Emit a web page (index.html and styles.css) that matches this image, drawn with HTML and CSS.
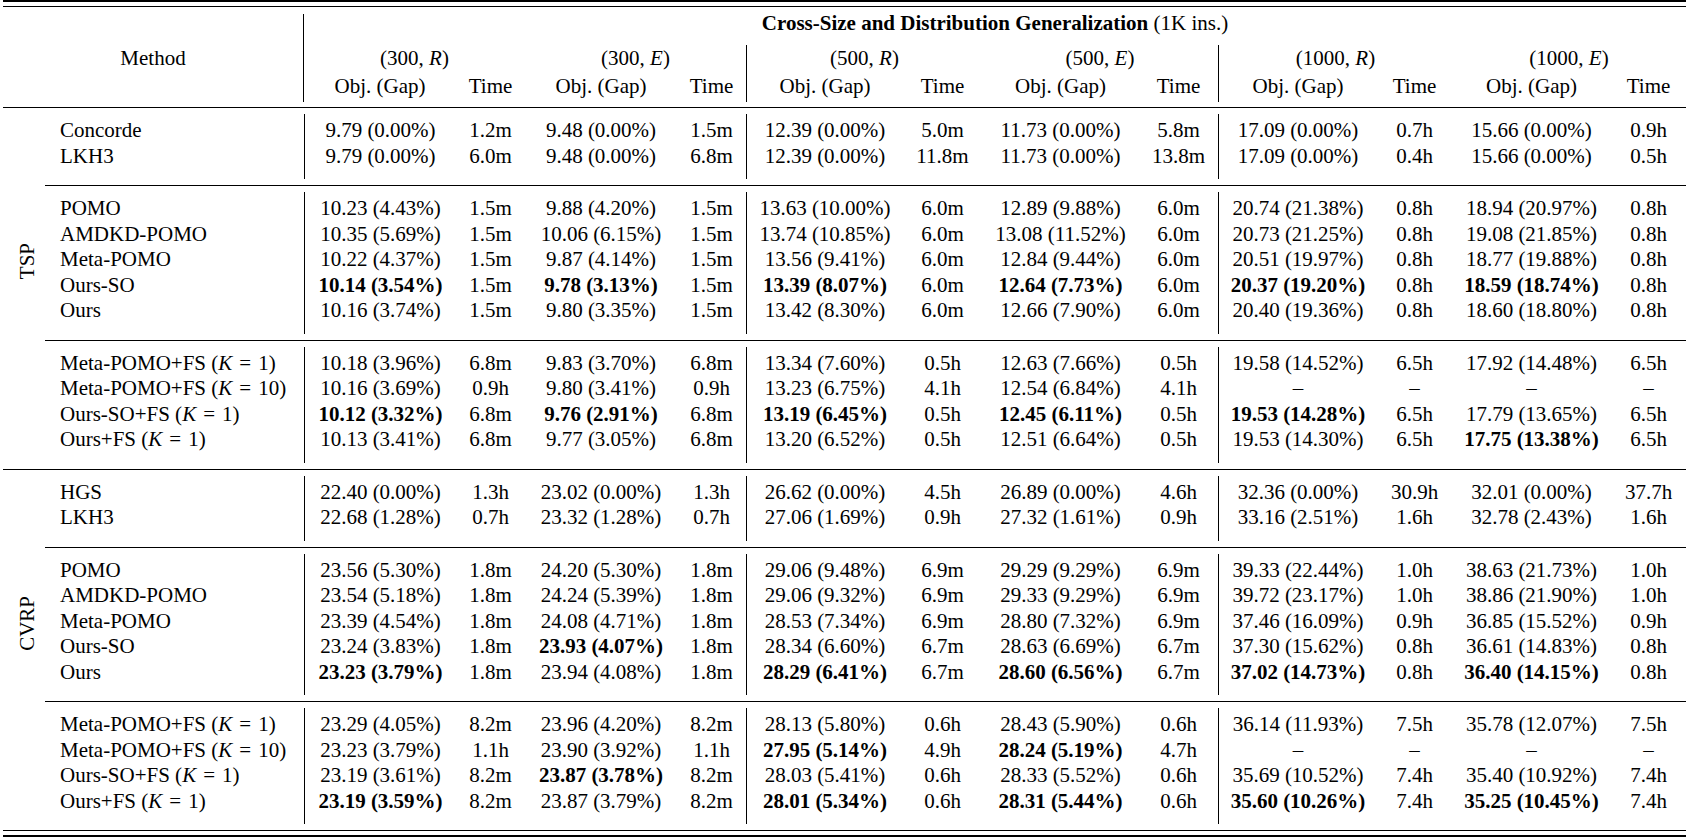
FILE: index.html
```html
<!DOCTYPE html>
<html>
<head>
<meta charset="utf-8">
<link rel="stylesheet" href="styles.css">
</head>
<body>
<table class="tbl">
<colgroup>
<col class="c-lab"><col class="c-meth">
<col class="c-o1"><col class="c-t1"><col class="c-o1"><col class="c-t1">
<col class="c-o2"><col class="c-t2"><col class="c-o2"><col class="c-t2">
<col class="c-o3"><col class="c-t3"><col class="c-o3"><col class="c-t3">
</colgroup>
<tbody>
<tr class="toprule"><td colspan="14"><div class="thick"></div><div class="thin"></div></td></tr>
<tr class="h1"><td colspan="2" class="vr"></td><td colspan="12"><b>Cross-Size and Distribution Generalization</b> (1K ins.)</td></tr>
<tr class="h2"><td colspan="2" class="vr">Method</td><td colspan="2">(300, <i>R</i>)</td><td colspan="2">(300, <i>E</i>)</td><td colspan="2" class="v">(500, <i>R</i>)</td><td colspan="2">(500, <i>E</i>)</td><td colspan="2" class="v">(1000, <i>R</i>)</td><td colspan="2">(1000, <i>E</i>)</td></tr>
<tr class="h3"><td colspan="2" class="vr"></td><td>Obj. (Gap)</td><td>Time</td><td>Obj. (Gap)</td><td>Time</td><td class="v">Obj. (Gap)</td><td>Time</td><td>Obj. (Gap)</td><td>Time</td><td class="v">Obj. (Gap)</td><td>Time</td><td>Obj. (Gap)</td><td>Time</td></tr>
<tr class="hr"><td colspan="14"><div class="ln"></div></td></tr>

<tr class="f"><td></td><td class="m">Concorde</td><td class="v">9.79 (0.00%)</td><td>1.2m</td><td>9.48 (0.00%)</td><td>1.5m</td><td class="v">12.39 (0.00%)</td><td>5.0m</td><td>11.73 (0.00%)</td><td>5.8m</td><td class="v">17.09 (0.00%)</td><td>0.7h</td><td>15.66 (0.00%)</td><td>0.9h</td></tr>
<tr class="l"><td></td><td class="m">LKH3</td><td class="v">9.79 (0.00%)</td><td>6.0m</td><td>9.48 (0.00%)</td><td>6.8m</td><td class="v">12.39 (0.00%)</td><td>11.8m</td><td>11.73 (0.00%)</td><td>13.8m</td><td class="v">17.09 (0.00%)</td><td>0.4h</td><td>15.66 (0.00%)</td><td>0.5h</td></tr>
<tr class="r"><td></td><td colspan="13"><div class="ln"></div></td></tr>

<tr class="f"><td rowspan="5" class="lab"><span class="vlabel">TSP</span></td><td class="m">POMO</td><td class="v">10.23 (4.43%)</td><td>1.5m</td><td>9.88 (4.20%)</td><td>1.5m</td><td class="v">13.63 (10.00%)</td><td>6.0m</td><td>12.89 (9.88%)</td><td>6.0m</td><td class="v">20.74 (21.38%)</td><td>0.8h</td><td>18.94 (20.97%)</td><td>0.8h</td></tr>
<tr><td class="m">AMDKD-POMO</td><td class="v">10.35 (5.69%)</td><td>1.5m</td><td>10.06 (6.15%)</td><td>1.5m</td><td class="v">13.74 (10.85%)</td><td>6.0m</td><td>13.08 (11.52%)</td><td>6.0m</td><td class="v">20.73 (21.25%)</td><td>0.8h</td><td>19.08 (21.85%)</td><td>0.8h</td></tr>
<tr><td class="m">Meta-POMO</td><td class="v">10.22 (4.37%)</td><td>1.5m</td><td>9.87 (4.14%)</td><td>1.5m</td><td class="v">13.56 (9.41%)</td><td>6.0m</td><td>12.84 (9.44%)</td><td>6.0m</td><td class="v">20.51 (19.97%)</td><td>0.8h</td><td>18.77 (19.88%)</td><td>0.8h</td></tr>
<tr><td class="m">Ours-SO</td><td class="v"><b>10.14 (3.54%)</b></td><td>1.5m</td><td><b>9.78 (3.13%)</b></td><td>1.5m</td><td class="v"><b>13.39 (8.07%)</b></td><td>6.0m</td><td><b>12.64 (7.73%)</b></td><td>6.0m</td><td class="v"><b>20.37 (19.20%)</b></td><td>0.8h</td><td><b>18.59 (18.74%)</b></td><td>0.8h</td></tr>
<tr class="l"><td class="m">Ours</td><td class="v">10.16 (3.74%)</td><td>1.5m</td><td>9.80 (3.35%)</td><td>1.5m</td><td class="v">13.42 (8.30%)</td><td>6.0m</td><td>12.66 (7.90%)</td><td>6.0m</td><td class="v">20.40 (19.36%)</td><td>0.8h</td><td>18.60 (18.80%)</td><td>0.8h</td></tr>
<tr class="r"><td></td><td colspan="13"><div class="ln"></div></td></tr>

<tr class="f"><td></td><td class="m">Meta-POMO+FS (<i>K</i><span class="eq">=</span>1)</td><td class="v">10.18 (3.96%)</td><td>6.8m</td><td>9.83 (3.70%)</td><td>6.8m</td><td class="v">13.34 (7.60%)</td><td>0.5h</td><td>12.63 (7.66%)</td><td>0.5h</td><td class="v">19.58 (14.52%)</td><td>6.5h</td><td>17.92 (14.48%)</td><td>6.5h</td></tr>
<tr><td></td><td class="m">Meta-POMO+FS (<i>K</i><span class="eq">=</span>10)</td><td class="v">10.16 (3.69%)</td><td>0.9h</td><td>9.80 (3.41%)</td><td>0.9h</td><td class="v">13.23 (6.75%)</td><td>4.1h</td><td>12.54 (6.84%)</td><td>4.1h</td><td class="v">–</td><td>–</td><td>–</td><td>–</td></tr>
<tr><td></td><td class="m">Ours-SO+FS (<i>K</i><span class="eq">=</span>1)</td><td class="v"><b>10.12 (3.32%)</b></td><td>6.8m</td><td><b>9.76 (2.91%)</b></td><td>6.8m</td><td class="v"><b>13.19 (6.45%)</b></td><td>0.5h</td><td><b>12.45 (6.11%)</b></td><td>0.5h</td><td class="v"><b>19.53 (14.28%)</b></td><td>6.5h</td><td>17.79 (13.65%)</td><td>6.5h</td></tr>
<tr class="l"><td></td><td class="m">Ours+FS (<i>K</i><span class="eq">=</span>1)</td><td class="v">10.13 (3.41%)</td><td>6.8m</td><td>9.77 (3.05%)</td><td>6.8m</td><td class="v">13.20 (6.52%)</td><td>0.5h</td><td>12.51 (6.64%)</td><td>0.5h</td><td class="v">19.53 (14.30%)</td><td>6.5h</td><td><b>17.75 (13.38%)</b></td><td>6.5h</td></tr>
<tr class="r"><td colspan="14"><div class="ln"></div></td></tr>

<tr class="f"><td></td><td class="m">HGS</td><td class="v">22.40 (0.00%)</td><td>1.3h</td><td>23.02 (0.00%)</td><td>1.3h</td><td class="v">26.62 (0.00%)</td><td>4.5h</td><td>26.89 (0.00%)</td><td>4.6h</td><td class="v">32.36 (0.00%)</td><td>30.9h</td><td>32.01 (0.00%)</td><td>37.7h</td></tr>
<tr class="l"><td></td><td class="m">LKH3</td><td class="v">22.68 (1.28%)</td><td>0.7h</td><td>23.32 (1.28%)</td><td>0.7h</td><td class="v">27.06 (1.69%)</td><td>0.9h</td><td>27.32 (1.61%)</td><td>0.9h</td><td class="v">33.16 (2.51%)</td><td>1.6h</td><td>32.78 (2.43%)</td><td>1.6h</td></tr>
<tr class="r"><td></td><td colspan="13"><div class="ln"></div></td></tr>

<tr class="f"><td rowspan="5" class="lab"><span class="vlabel">CVRP</span></td><td class="m">POMO</td><td class="v">23.56 (5.30%)</td><td>1.8m</td><td>24.20 (5.30%)</td><td>1.8m</td><td class="v">29.06 (9.48%)</td><td>6.9m</td><td>29.29 (9.29%)</td><td>6.9m</td><td class="v">39.33 (22.44%)</td><td>1.0h</td><td>38.63 (21.73%)</td><td>1.0h</td></tr>
<tr><td class="m">AMDKD-POMO</td><td class="v">23.54 (5.18%)</td><td>1.8m</td><td>24.24 (5.39%)</td><td>1.8m</td><td class="v">29.06 (9.32%)</td><td>6.9m</td><td>29.33 (9.29%)</td><td>6.9m</td><td class="v">39.72 (23.17%)</td><td>1.0h</td><td>38.86 (21.90%)</td><td>1.0h</td></tr>
<tr><td class="m">Meta-POMO</td><td class="v">23.39 (4.54%)</td><td>1.8m</td><td>24.08 (4.71%)</td><td>1.8m</td><td class="v">28.53 (7.34%)</td><td>6.9m</td><td>28.80 (7.32%)</td><td>6.9m</td><td class="v">37.46 (16.09%)</td><td>0.9h</td><td>36.85 (15.52%)</td><td>0.9h</td></tr>
<tr><td class="m">Ours-SO</td><td class="v">23.24 (3.83%)</td><td>1.8m</td><td><b>23.93 (4.07%)</b></td><td>1.8m</td><td class="v">28.34 (6.60%)</td><td>6.7m</td><td>28.63 (6.69%)</td><td>6.7m</td><td class="v">37.30 (15.62%)</td><td>0.8h</td><td>36.61 (14.83%)</td><td>0.8h</td></tr>
<tr class="l"><td class="m">Ours</td><td class="v"><b>23.23 (3.79%)</b></td><td>1.8m</td><td>23.94 (4.08%)</td><td>1.8m</td><td class="v"><b>28.29 (6.41%)</b></td><td>6.7m</td><td><b>28.60 (6.56%)</b></td><td>6.7m</td><td class="v"><b>37.02 (14.73%)</b></td><td>0.8h</td><td><b>36.40 (14.15%)</b></td><td>0.8h</td></tr>
<tr class="r"><td></td><td colspan="13"><div class="ln"></div></td></tr>

<tr class="f"><td></td><td class="m">Meta-POMO+FS (<i>K</i><span class="eq">=</span>1)</td><td class="v">23.29 (4.05%)</td><td>8.2m</td><td>23.96 (4.20%)</td><td>8.2m</td><td class="v">28.13 (5.80%)</td><td>0.6h</td><td>28.43 (5.90%)</td><td>0.6h</td><td class="v">36.14 (11.93%)</td><td>7.5h</td><td>35.78 (12.07%)</td><td>7.5h</td></tr>
<tr><td></td><td class="m">Meta-POMO+FS (<i>K</i><span class="eq">=</span>10)</td><td class="v">23.23 (3.79%)</td><td>1.1h</td><td>23.90 (3.92%)</td><td>1.1h</td><td class="v"><b>27.95 (5.14%)</b></td><td>4.9h</td><td><b>28.24 (5.19%)</b></td><td>4.7h</td><td class="v">–</td><td>–</td><td>–</td><td>–</td></tr>
<tr><td></td><td class="m">Ours-SO+FS (<i>K</i><span class="eq">=</span>1)</td><td class="v">23.19 (3.61%)</td><td>8.2m</td><td><b>23.87 (3.78%)</b></td><td>8.2m</td><td class="v">28.03 (5.41%)</td><td>0.6h</td><td>28.33 (5.52%)</td><td>0.6h</td><td class="v">35.69 (10.52%)</td><td>7.4h</td><td>35.40 (10.92%)</td><td>7.4h</td></tr>
<tr class="l"><td></td><td class="m">Ours+FS (<i>K</i><span class="eq">=</span>1)</td><td class="v"><b>23.19 (3.59%)</b></td><td>8.2m</td><td>23.87 (3.79%)</td><td>8.2m</td><td class="v"><b>28.01 (5.34%)</b></td><td>0.6h</td><td><b>28.31 (5.44%)</b></td><td>0.6h</td><td class="v"><b>35.60 (10.26%)</b></td><td>7.4h</td><td><b>35.25 (10.45%)</b></td><td>7.4h</td></tr>
<tr class="botrule"><td colspan="14"><div class="thin"></div><div class="thick"></div></td></tr>
</tbody>
</table>
</body>
</html>
```

FILE: styles.css
```css
html, body {
  margin: 0;
  padding: 0;
  background: #ffffff;
}

.tbl {
  margin-left: 3px;
  width: 1683px;
  table-layout: fixed;
  border-collapse: separate;
  border-spacing: 0;
  font-family: "Liberation Serif", "Times New Roman", serif;
  font-size: 21px;
  color: #000;
}

.c-lab { width: 42px; }
.c-meth { width: 259px; }
.c-o1 { width: 152px; }
.c-t1 { width: 69px; }
.c-o2 { width: 157px; }
.c-t2 { width: 79px; }
.c-o3 { width: 159px; }
.c-t3 { width: 75px; }

.tbl td {
  padding: 0;
  text-align: center;
  vertical-align: middle;
  white-space: nowrap;
  line-height: 25.5px;
}

.tbl b { font-weight: bold; }
.tbl i { font-style: italic; }

.eq {
  padding: 0 7px;
}

.tbl td.v { border-left: 1px solid #000; }
.tbl td.vr { border-right: 1px solid #000; }

.tbl td.m {
  text-align: left;
  padding-left: 15px;
}

.tbl tr.f td { padding-top: 4px; }
.tbl tr.l td { padding-bottom: 10px; }

.tbl td.lab {
  padding: 0 0 0 6px;
  text-align: center;
  vertical-align: middle;
}

.vlabel {
  display: inline-block;
  writing-mode: vertical-rl;
  transform: rotate(180deg);
  line-height: 25px;
}

.ln {
  height: 1px;
  background: #000;
}

.tbl tr.r td {
  padding: 6px 0;
  line-height: 0;
  font-size: 0;
}

.tbl tr.hr td {
  padding: 5px 0 6px 0;
  line-height: 0;
  font-size: 0;
}

.tbl tr.toprule td {
  padding: 0 0 7px 0;
  line-height: 0;
  font-size: 0;
}

.tbl tr.botrule td {
  padding: 6px 0 0 0;
  line-height: 0;
  font-size: 0;
}

.thick {
  height: 2px;
  background: #000;
}

.thin {
  height: 1px;
  background: #000;
}

.toprule .thin { margin-top: 4px; }
.botrule .thick { margin-top: 4px; }

.tbl tr.h1 td {
  height: 31px;
  line-height: 18px;
  vertical-align: top;
}

.tbl tr.h2 td { height: 27px; }
.tbl tr.h3 td { height: 30px; }
```
